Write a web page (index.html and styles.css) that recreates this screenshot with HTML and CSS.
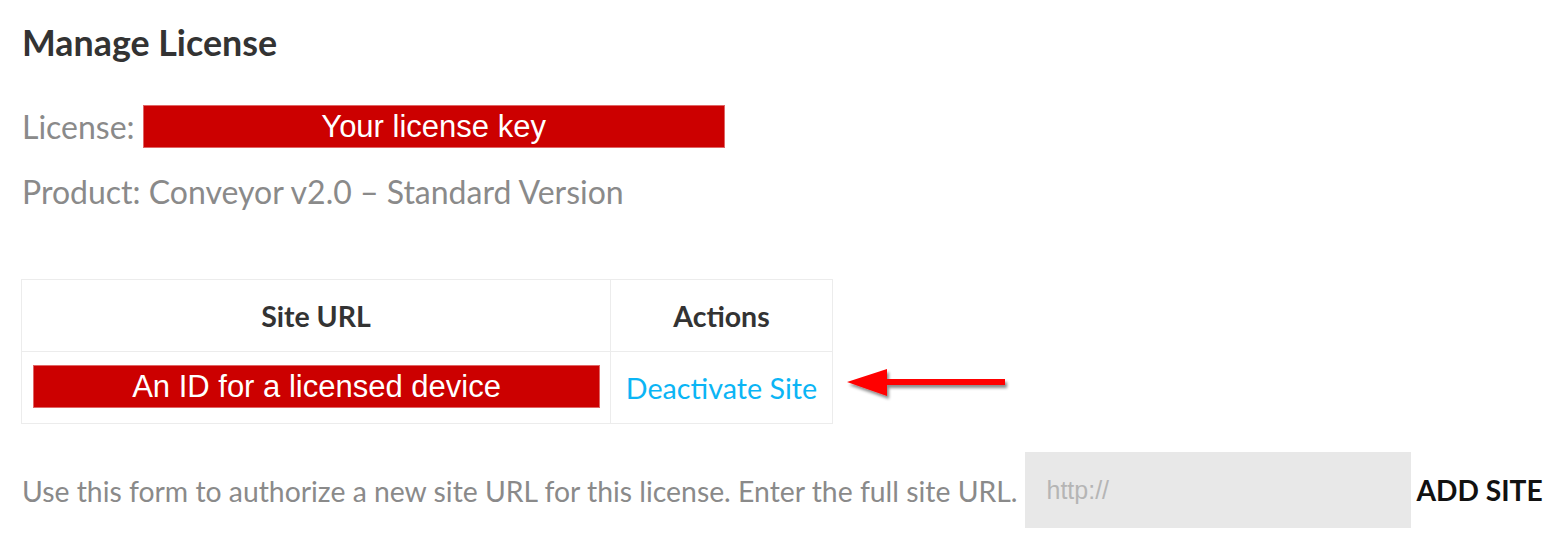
FILE: index.html
```html
<!DOCTYPE html>
<html>
<head>
<meta charset="utf-8">
<link rel="stylesheet" href="styles.css">
</head>
<body>
<div class="page">
  <h2 class="title">Manage License</h2>
  <p class="line license-line">License: <span class="redact redact-key">Your license key</span></p>
  <p class="line">Product: Conveyor v2.0 – Standard Version</p>
  <div class="table-wrap">
    <table class="sites">
      <thead>
        <tr><th class="col-url">Site URL</th><th class="col-act">Actions</th></tr>
      </thead>
      <tbody>
        <tr>
          <td class="col-url"><span class="redact redact-id">An ID for a licensed device</span></td>
          <td class="col-act"><a class="deact" href="#">Deactivate Site</a></td>
        </tr>
      </tbody>
    </table>
    <svg class="arrow" width="170" height="40" viewBox="0 0 170 40">
      <defs>
        <filter id="sh" x="-10%" y="-30%" width="130%" height="180%">
          <feDropShadow dx="2" dy="3" stdDeviation="1.5" flood-color="#000" flood-opacity="0.45"/>
        </filter>
      </defs>
      <g filter="url(#sh)">
        <polygon points="2,17 42,4 42,14 160,14 160,20 42,20 42,31" fill="#ff0000"/>
      </g>
    </svg>
  </div>
  <form class="add-form">
    <span class="form-text">Use this form to authorize a new site URL for this license. Enter the full site URL.</span>
    <input class="url-input" type="text" placeholder="http://">
    <button class="add-btn" type="button">ADD SITE</button>
  </form>
</div>
</body>
</html>
```

FILE: styles.css
```css
html, body {
  margin: 0;
  padding: 0;
  background: #ffffff;
}
.page {
  padding: 21px 0 0 22px;
  font-family: Lato, "Open Sans", sans-serif;
}
.title {
  margin: 0;
  font-size: 35.8px;
  font-weight: 700;
  color: #333333;
  line-height: 44px;
}
.line {
  margin: 0;
  font-size: 32px;
  color: #8a8a8a;
  line-height: 43px;
}
.license-line {
  margin-top: 40px;
  display: flex;
  align-items: center;
  gap: 8px;
}
.line + .line {
  margin-top: 22px;
}
.redact {
  display: flex;
  align-items: center;
  justify-content: center;
  background: #cc0000;
  color: #ffffff;
  font-family: "Liberation Sans", Arial, sans-serif;
  font-size: 31px;
  height: 43px;
  box-sizing: border-box;
  border: 1px solid #e06666;
}
.redact-key {
  width: 582px;
}
.redact-id {
  width: 567px;
}
.table-wrap {
  margin-top: 66px;
  display: flex;
  align-items: flex-end;
  gap: 12px;
  margin-left: -1px;
}
.sites {
  border-collapse: collapse;
}
.sites th, .sites td {
  border: 1px solid #ececec;
  height: 72px;
  box-sizing: border-box;
  padding: 0;
  text-align: center;
}
.sites th {
  font-size: 28.5px;
  font-weight: 700;
  color: #333333;
}
.col-url {
  width: 589px;
}
.col-act {
  width: 222px;
}
.sites td.col-url {
  padding: 0 10px 2px 11px;
}
.deact {
  color: #0bb5f5;
  text-decoration: none;
  font-size: 28.7px;
}
.arrow {
  display: block;
  margin-bottom: 19px;
}
.add-form {
  margin-top: 28px;
  display: flex;
  align-items: center;
}
.form-text {
  font-size: 28.35px;
  color: #8a8a8a;
  margin-top: 1px;
}
.url-input {
  width: 386px;
  height: 76px;
  box-sizing: border-box;
  margin-left: 7px;
  border: none;
  background: #e8e8e8;
  padding: 0 22px;
  font-family: "Liberation Sans", Arial, sans-serif;
  font-size: 25px;
  color: #555;
  outline: none;
}
.url-input::placeholder {
  color: #b5b5b5;
}
.add-btn {
  margin-left: 6px;
  border: none;
  background: transparent;
  padding: 0;
  font-family: Lato, sans-serif;
  font-weight: 700;
  font-size: 28.2px;
  color: #111111;
  cursor: pointer;
}
```
